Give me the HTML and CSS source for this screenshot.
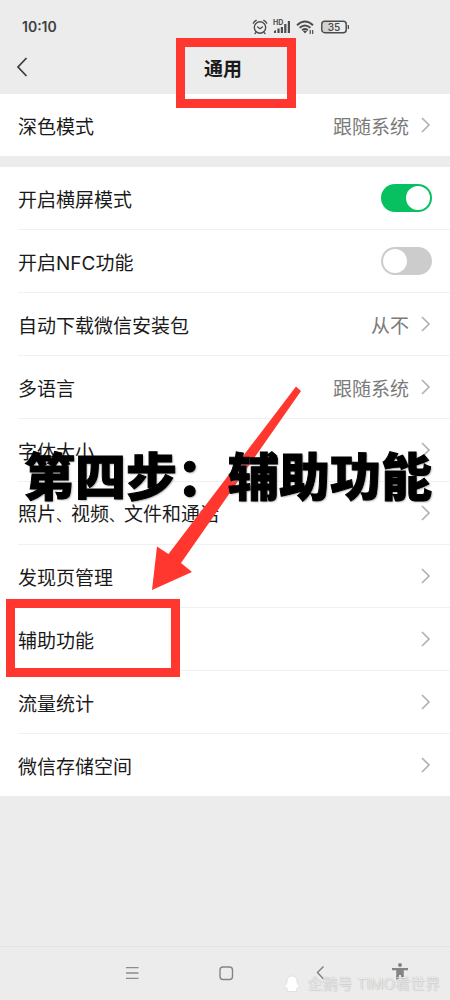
FILE: index.html
```html
<!DOCTYPE html>
<html lang="zh-CN">
<head>
<meta charset="utf-8">
<meta name="viewport" content="width=device-width, initial-scale=1">
<title>通用</title>
<link rel="stylesheet" href="styles.css">
</head>
<body>
<svg class="defs" width="0" height="0" aria-hidden="true">
  <symbol id="chevron" viewBox="0 0 12 18"><path d="M2 2l7 7-7 7" fill="none" stroke="#b2b2b2" stroke-width="1.7"/></symbol>
</svg>
<div class="page">
  <div class="status">
    <span class="time">10:10</span>
    <div class="status-icons">
      <svg width="16" height="16" viewBox="0 0 16 16" fill="none" stroke="#4c4c4c" stroke-width="1.4" stroke-linecap="round"><circle cx="8" cy="8.5" r="5.7"/><path d="M1.3 4.2Q2.2 2.3 4.2 1.4M14.7 4.2Q13.8 2.3 11.8 1.4M5.7 8l2.3 1.7L10.4 8M4 13.4l-1 1.2M12 13.4l1 1.2"/></svg>
      <svg width="18" height="16" viewBox="0 0 18 16"><text class="hd" x="0" y="6">HD</text><path d="M1 14v-2l2-1v3zM4.4 14V9.500h2.200V14zM7.800 14V8h2.200v6zM11.200 14V5h2.200v9zM14.800 14V2H17v12z" fill="#4c4c4c"/></svg>
      <svg width="19" height="16" viewBox="0 0 19 16" fill="none" stroke="#4c4c4c" stroke-width="1.9"><path d="M1 6.2Q9 -1 17 6.2M3.6 8.8Q9 4 14.4 8.8M6.1 11.2Q9 8.8 11.9 11.2"/><path d="M7 12.2Q9 11 11 12.2L9 14.5z" fill="#4c4c4c" stroke="none"/><path d="M14.2 11v4M16.7 11v4" stroke-width="1.2"/></svg>
      <svg width="30" height="16" viewBox="0 0 30 16"><path d="M5 3h6v10H5Q3 13 3 11V5Q3 3 5 3z" fill="#d2d2d2"/><rect x="1.8" y="2.3" width="24.4" height="11.4" rx="3" fill="none" stroke="#4c4c4c" stroke-width="1.5"/><path d="M27.7 6h1.3v4h-1.3z" fill="#4c4c4c"/><text class="level" x="14" y="11.6" text-anchor="middle">35</text></svg>
    </div>
  </div>
  <header class="bar">
    <a class="back" href="#" aria-label="返回"><svg width="12" height="20" viewBox="0 0 12 20"><path d="M10.500 1L2 10l8.500 9" fill="none" stroke="#3a3a3a" stroke-width="1.7"/></svg></a>
    <h1 class="title">通用</h1>
    <div class="mark mark-title"></div>
  </header>
  <main>
    <div class="group">
      <a class="row" href="#"><span class="label">深色模式</span><span class="value">跟随系统</span><svg class="chev"><use href="#chevron"/></svg></a>
    </div>
    <div class="group">
      <div class="row"><label class="label" for="landscape">开启横屏模式</label><input class="switch" id="landscape" type="checkbox" checked></div>
      <div class="row"><label class="label" for="nfc">开启NFC功能</label><input class="switch" id="nfc" type="checkbox"></div>
      <a class="row" href="#"><span class="label">自动下载微信安装包</span><span class="value">从不</span><svg class="chev"><use href="#chevron"/></svg></a>
      <a class="row" href="#"><span class="label">多语言</span><span class="value">跟随系统</span><svg class="chev"><use href="#chevron"/></svg></a>
      <a class="row" href="#"><span class="label">字体大小</span><svg class="chev"><use href="#chevron"/></svg></a>
      <a class="row" href="#"><span class="label">照片<span class="comma">、</span>视频<span class="comma">、</span>文件和通话</span><svg class="chev"><use href="#chevron"/></svg></a>
      <a class="row" href="#"><span class="label">发现页管理</span><svg class="chev"><use href="#chevron"/></svg></a>
      <div class="marked">
        <a class="row" href="#"><span class="label">辅助功能</span><svg class="chev"><use href="#chevron"/></svg></a>
        <div class="mark mark-row"></div>
      </div>
      <a class="row" href="#"><span class="label">流量统计</span><svg class="chev"><use href="#chevron"/></svg></a>
      <a class="row" href="#"><span class="label">微信存储空间</span><svg class="chev"><use href="#chevron"/></svg></a>
    </div>
  </main>
  <nav class="keys">
    <button class="key" aria-label="菜单"><svg width="16" height="16" viewBox="0 0 16 16"><path d="M2 2.700h12.500M2 8h12.500M2 13.300h12.500" stroke="#8c8c8c" stroke-width="1.300"/></svg></button>
    <button class="key" aria-label="主页"><svg width="16" height="16" viewBox="0 0 16 16"><rect x="2" y="2" width="12.500" height="12.500" rx="3" fill="none" stroke="#858585" stroke-width="1.400"/></svg></button>
    <button class="key" aria-label="后退"><svg width="16" height="16" viewBox="0 0 16 16"><path d="M11.500 1.500L5.500 7.500l6 6.500" fill="none" stroke="#858585" stroke-width="1.500"/></svg></button>
    <button class="key" aria-label="无障碍"><svg width="18" height="20" viewBox="0 0 18 20" fill="#858585"><circle cx="9" cy="2" r="2"/><path d="M1 5h16v2.200H12.800V17H10v-5H8v5H5.200V7.200H1z"/></svg></button>
  </nav>
  <svg class="arrow" width="150" height="206" viewBox="0 0 150 206"><path d="M146 0.500L151 5L31 177L42 186L2 204L7 160.500L18.500 168z" fill="#ff372f"/></svg>
  <p class="caption">第四步：辅助功能</p>
  <div class="watermark">
    <svg width="18" height="18" viewBox="0 0 18 18"><path d="M9 1C5.500 1 4 3.500 4 6.500Q4 8 3 9.500Q1 12 1.600 13.500Q2.500 13.500 3.500 12.500Q4 14 5 14.800Q3.500 15.600 4.500 16.500H13.500Q14.500 15.600 13 14.800Q14 14 14.500 12.500Q15.500 13.500 16.400 13.500Q17 12 15 9.500Q14 8 14 6.500C14 3.500 12.500 1 9 1z" fill="#fff" stroke="#d4d4d4" stroke-width=".6"/></svg>
    <span>企鹅号 TIMO看世界</span>
  </div>
</div>
</body>
</html>
```
FILE: styles.css
```css
* { box-sizing: border-box; }
body {
  margin: 0;
  background: #ececec;
  color: #1a1a1a;
  font: 19px/28px Inter, "Noto Sans CJK SC", sans-serif;
}
a { color: inherit; text-decoration: none; }
.defs { position: absolute; }
.page {
  position: relative;
  min-height: 100vh;
  display: flex;
  flex-direction: column;
  overflow: hidden;
}
main { flex: 1; }
.status {
  display: flex;
  align-items: center;
  height: 40px;
  padding: 14px 100px 0 22px;
}
.time {
  flex: 1;
  color: #404040;
  font-size: 14px;
  font-weight: 600;
}
.status-icons { display: flex; gap: 5px; }
.hd { font: bold 7px Inter, sans-serif; fill: #4c4c4c; }
.level { font: 600 10px Inter, sans-serif; fill: #4c4c4c; }
.bar {
  position: relative;
  display: grid;
  grid-template-columns: 1fr auto 1fr;
  align-items: center;
  height: 54px;
  padding: 0 16px;
}
.back { display: flex; }
.title {
  margin: 0;
  padding: 5px 4px 0 0;
  font-size: 19px;
  font-weight: 600;
}
.mark {
  position: absolute;
  border: 9px solid #ff372f;
  pointer-events: none;
}
.mark-title {
  top: -2px;
  left: calc(50% - 49px);
  width: 120px;
  height: 70px;
  z-index: 1;
}
.group { background: #fff; }
.group + .group { margin-top: 11px; }
.row {
  display: flex;
  align-items: center;
  min-height: 63px;
  padding-right: 18px;
  margin-left: 18px;
  border-bottom: 1px solid #f0f0f0;
}
.group > .row:last-child { min-height: 62px; border-bottom: 0; }
.label { flex: 1; padding-top: 5px; }
.comma { font-size: 15px; }
.value { color: #7a7a7a; padding-top: 5px; margin-right: 11px; }
.chev { width: 12px; height: 18px; }
.marked { position: relative; }
.mark-row { top: -9px; left: 6px; width: 174px; height: 78px; }
.switch {
  appearance: none;
  width: 51px;
  height: 28px;
  margin: 0;
  padding: 2px;
  border-radius: 14px;
  background: #ccc;
  display: flex;
}
.switch::before {
  content: "";
  width: 24px;
  height: 24px;
  border-radius: 50%;
  background: #fff;
}
.switch:checked { background: #07c160; justify-content: flex-end; }
.keys {
  display: grid;
  grid-template-columns: 93fr 93fr 93fr 67fr;
  height: 54px;
  padding: 0 16px 2px 85px;
  border-top: 1px solid #e3e3e3;
}
.key {
  display: flex;
  align-items: center;
  justify-content: center;
  padding: 0;
  border: 0;
  background: none;
}
.arrow { position: absolute; left: 150px; top: 386px; overflow: visible; }
.caption {
  position: absolute;
  top: 443px;
  left: 24px;
  margin: 0;
  color: #000;
  font: 900 51px/62px "Noto Sans CJK SC", sans-serif;
  white-space: nowrap;
  -webkit-text-stroke: 1px #000;
  text-shadow: 1px 1px 2px #999;
}
.watermark {
  position: absolute;
  right: 10px;
  bottom: 5px;
  display: flex;
  align-items: center;
  gap: 6px;
  color: #ededed;
  font-size: 15px;
  font-weight: 300;
  line-height: 22px;
  text-shadow: 0 0 1px #aaa, 1px 1px 1px #d0d0d0;
}
```
